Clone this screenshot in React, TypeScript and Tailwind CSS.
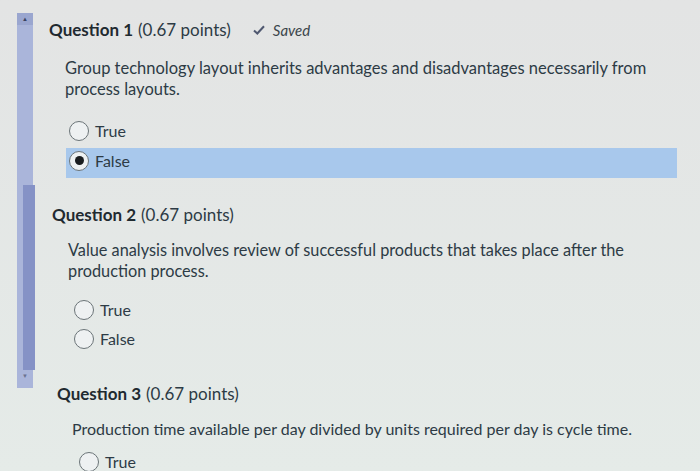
import React from "react";

function Radio({ checked }: { checked?: boolean }) {
  return (
    <span className="flex h-[20px] w-[20px] shrink-0 items-center justify-center rounded-full border-[1.5px] border-[#6b7478] bg-[#eef1f2]">
      {checked && <span className="h-[9px] w-[9px] rounded-full bg-[#1a1d1f]" />}
    </span>
  );
}

function Option({ label, checked, highlight }: { label: string; checked?: boolean; highlight?: boolean }) {
  return (
    <div
      className={
        "flex items-center gap-[6px] pl-[3px] " +
        (highlight ? "mt-[3px] h-[30px] w-[611px] bg-[#a8c8ec] pb-[5px]" : "h-[29px]")
      }
    >
      <Radio checked={checked} />
      <span className="text-[16px] text-[#2d3b45]">{label}</span>
    </div>
  );
}

export default function App() {
  return (
    <div
      className="flex h-[471px] w-[700px] overflow-hidden bg-gradient-to-b from-[#e3e4e4] to-[#e5ebe8] text-[#2d3b45]"
      style={{ fontFamily: "Lato, 'Open Sans', sans-serif" }}
    >
      {/* scrollbar */}
      <div className="ml-[17px] mt-[13px] flex h-[375px] w-[16px] shrink-0 flex-col bg-[#aab5da]">
        <div className="flex h-[12px] items-center justify-center bg-[#9aa6cf]">
          <span className="text-[6px] leading-none text-[#3a4260]">▲</span>
        </div>
        <div className="mt-[160px] ml-[6px] h-[185px] w-[12px] bg-[#8592c6]" />
        <div className="flex h-[12px] items-center justify-center">
          <span className="text-[6px] leading-none text-[#6a7290]">▼</span>
        </div>
      </div>

      <div className="flex flex-1 flex-col">
        {/* Question 1 */}
        <div className="ml-[16px] mt-[19px]">
          <div className="flex items-center text-[17px] leading-[22px]">
            <span className="font-bold text-[#1f2a30]">Question 1</span>
            <span className="ml-[5px] text-[#2d3b45]">(0.67 points)</span>
            <span className="ml-[22px] flex items-center gap-[8px] text-[15px] italic text-[#3a444a]">
              <svg width="12" height="10" viewBox="0 0 12 10">
                <path d="M1 5.5 L4.3 8.5 L11 1.2" fill="none" stroke="#4f5870" strokeWidth="2" />
              </svg>
              Saved
            </span>
          </div>
          <div className="ml-[16px] mt-[17px] w-[610px] text-[16.5px] leading-[21px]">
            Group technology layout inherits advantages and disadvantages necessarily from process layouts.
          </div>
          <div className="ml-[17px] mt-[16px] flex flex-col">
            <Option label="True" />
            <Option label="False" checked highlight />
          </div>
        </div>

        {/* Question 2 */}
        <div className="ml-[19px] mt-[26px]">
          <div className="flex items-center text-[17px] leading-[22px]">
            <span className="font-bold text-[#1f2a30]">Question 2</span>
            <span className="ml-[5px] text-[#2d3b45]">(0.67 points)</span>
          </div>
          <div className="ml-[16px] mt-[13px] w-[600px] text-[16.3px] leading-[21px]">
            Value analysis involves review of successful products that takes place after the production process.
          </div>
          <div className="ml-[19px] mt-[14px] flex flex-col">
            <Option label="True" />
            <Option label="False" />
          </div>
        </div>

        {/* Question 3 */}
        <div className="ml-[24px] mt-[30px]">
          <div className="flex items-center text-[17px] leading-[22px]">
            <span className="font-bold text-[#1f2a30]">Question 3</span>
            <span className="ml-[5px] text-[#2d3b45]">(0.67 points)</span>
          </div>
          <div className="ml-[15px] mt-[13px] w-[590px] text-[16px] leading-[21px]">
            Production time available per day divided by units required per day is cycle time.
          </div>
          <div className="ml-[19px] mt-[8px] flex flex-col">
            <Option label="True" />
          </div>
        </div>
      </div>
    </div>
  );
}
